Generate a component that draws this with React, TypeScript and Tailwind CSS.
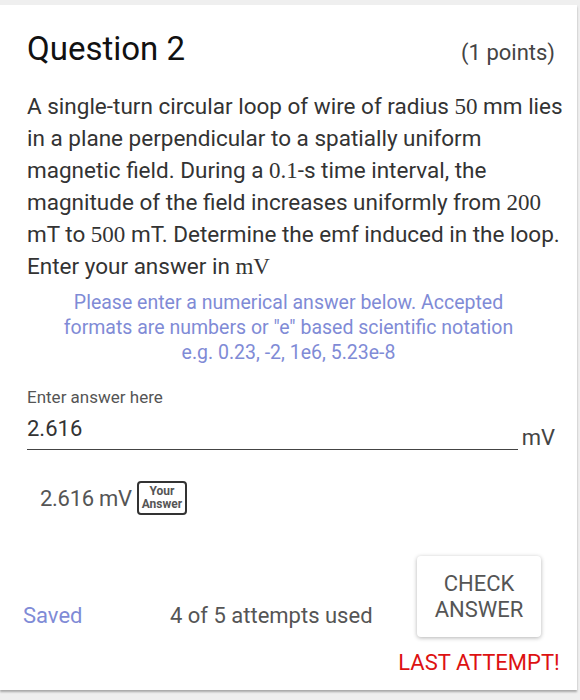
export default function App() {
  const math = "font-['Liberation_Serif',serif] text-[23px] leading-none";
  return (
    <div className="min-h-screen bg-[#efefef] pt-[5px] pr-[3px] font-['Roboto',sans-serif]">
      <div className="bg-white shadow-[0_2px_2px_rgba(0,0,0,0.3)] pb-[14px]">
        <div className="flex items-baseline justify-between pl-[27px] pr-[22px] pt-[24px]">
          <h1 className="text-[33px] leading-[40px] text-[#111]">Question 2</h1>
          <span className="text-[22px] text-[#444]">(1 points)</span>
        </div>
        <p className="pl-[27px] pr-[10px] mt-[21px] text-[22.5px] leading-[32px] text-[#333] whitespace-nowrap">
          A single-turn circular loop of wire of radius <span className={math}>50</span> mm lies
          <br />
          in a plane perpendicular to a spatially uniform
          <br />
          magnetic field. During a <span className={math}>0.1</span>-s time interval, the
          <br />
          magnitude of the field increases uniformly from <span className={math}>200</span>
          <br />
          mT to <span className={math}>500</span> mT. Determine the emf induced in the loop.
          <br />
          Enter your answer in <span className={math}>mV</span>
        </p>
        <p className="mt-[8px] text-center text-[19.5px] leading-[25px] text-[#7f8bd6]">
          Please enter a numerical answer below. Accepted
          <br />
          formats are numbers or "e" based scientific notation
          <br />
          e.g. 0.23, -2, 1e6, 5.23e-8
        </p>
        <div className="pl-[27px] pr-[22px] mt-[22px]">
          <div className="text-[17px] leading-[20px] text-[#555]">Enter answer here</div>
          <div className="flex items-end gap-[4px]">
            <div className="flex-1 border-b border-[#444] pt-[9px] pb-[7px] text-[22px] leading-[26px] text-[#333]">
              2.616
            </div>
            <span className="text-[22px] leading-[24px] text-[#444]">mV</span>
          </div>
        </div>
        <div className="flex items-center pl-[40px] mt-[31px]">
          <span className="text-[22px] text-[#555] tracking-[-0.3px]">2.616 mV</span>
          <span className="ml-[5px] flex flex-col items-center border-2 border-[#333] rounded-[4px] px-[3px] py-[2px] text-[12px] leading-[13px] font-bold text-[#555]">
            <span>Your</span>
            <span>Answer</span>
          </span>
        </div>
        <div className="flex items-start mt-[41px] pl-[23px] pr-[13px]">
          <div className="mt-[46px] w-[147px] text-[22px] leading-[28px] text-[#7f8bd6]">Saved</div>
          <div className="mt-[46px] text-[22px] leading-[28px] text-[#555] whitespace-nowrap">4 of 5 attempts used</div>
          <div className="flex flex-col items-center ml-auto w-[170px]">
            <button className="w-[124px] h-[81px] bg-white rounded-[4px] shadow-[0_1px_4px_rgba(0,0,0,0.3)] text-[22px] leading-[26px] text-[#555]">
              CHECK
              <br />
              ANSWER
            </button>
            <div className="mt-[13px] text-[22px] leading-[26px] text-[#dd1111] whitespace-nowrap">LAST ATTEMPT!</div>
          </div>
        </div>
      </div>
    </div>
  );
}
